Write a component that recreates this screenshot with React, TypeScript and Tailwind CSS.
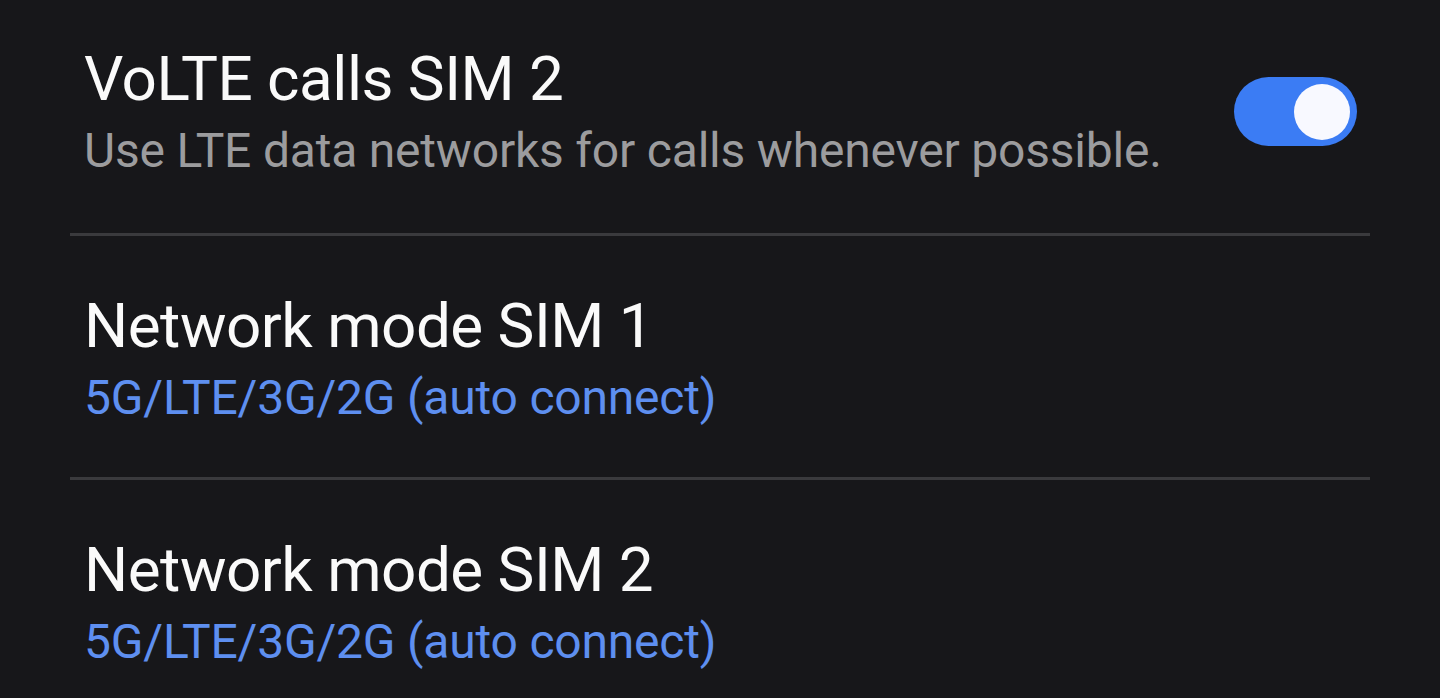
import React from "react";

type Row = {
  title: string;
  subtitle: string;
  accent?: boolean;
  toggle?: boolean;
};

const rows: Row[] = [
  { title: "VoLTE calls SIM 2", subtitle: "Use LTE data networks for calls whenever possible.", toggle: true },
  { title: "Network mode SIM 1", subtitle: "5G/LTE/3G/2G (auto connect)", accent: true },
  { title: "Network mode SIM 2", subtitle: "5G/LTE/3G/2G (auto connect)", accent: true },
];

function Toggle() {
  return (
    <div className="flex h-[69px] w-[123px] shrink-0 items-center justify-end rounded-full bg-[#3b7cf4] pr-[7px]">
      <div className="h-[56px] w-[56px] rounded-full bg-[#f8f9ff]" />
    </div>
  );
}

export default function App() {
  return (
    <div className="h-[698px] w-full overflow-hidden bg-[#17171a] font-['Roboto',sans-serif]">
      <div className="mx-[70px]">
        {rows.map((row, i) => (
          <div key={row.title}>
            {i > 0 && <div className="h-[3px] bg-[#3a3a3d]" />}
            <div
              className={`flex items-center justify-between pl-[14px] pr-[13px] ${
                i === 0 ? "pt-[43px] pb-[53px]" : "pt-[54px] pb-[50px]"
              }`}
            >
              <div className="flex flex-col gap-[7px] whitespace-nowrap">
                <p className="text-[62px] leading-[72px] tracking-[-0.5px] text-[#fafafa]">{row.title}</p>
                <p
                  className={`text-[48px] leading-[58px] tracking-[-0.2px] ${
                    row.accent ? "text-[#5e8ff0]" : "text-[#9c9c9e]"
                  }`}
                >
                  {row.subtitle}
                </p>
              </div>
              {row.toggle && <Toggle />}
            </div>
          </div>
        ))}
      </div>
    </div>
  );
}
